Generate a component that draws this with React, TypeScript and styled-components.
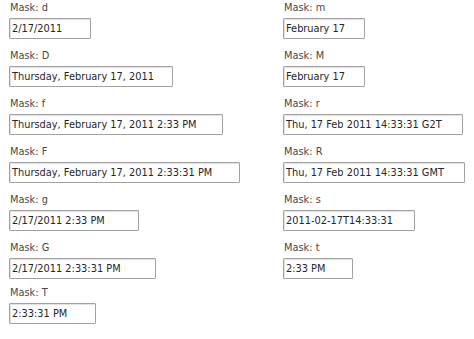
import React from 'react';
import styled, { createGlobalStyle } from 'styled-components';

const GlobalStyle = createGlobalStyle`
  html, body {
    margin: 0;
    padding: 0;
    background: #ffffff;
  }
`;

const Page = styled.div`
  font-family: "DejaVu Sans", Verdana, sans-serif;
  font-size: 9.8px;
  padding: 2px 0 0 9px;
  display: grid;
  grid-template-columns: 274px 1fr;
  align-items: start;
`;

const Column = styled.div`
  display: flex;
  flex-direction: column;
`;

const Field = styled.div<{ $tight?: boolean }>`
  display: flex;
  flex-direction: column;
  align-items: flex-start;
  margin-bottom: ${(p) => (p.$tight ? '8px' : '11px')};
`;

const Label = styled.label`
  color: #484848;
  line-height: 12px;
  height: 12px;
  margin-bottom: 4px;
  padding-left: 1px;
`;

const Box = styled.input<{ $w: number }>`
  box-sizing: border-box;
  width: ${(p) => p.$w}px;
  height: 21px;
  margin: 0;
  padding: 0 2px;
  border: 1px solid #a2a2a2;
  box-shadow: inset 1px 1px 0 #e2e2e2;
  border-radius: 1px;
  font-family: "DejaVu Sans", Verdana, sans-serif;
  font-size: 9.8px;
  color: #262626;
  background: #fff;
  outline: none;
`;

type Item = { mask: string; value: string; w: number; tight?: boolean };

const left: Item[] = [
  { mask: 'd', value: '2/17/2011', w: 82 },
  { mask: 'D', value: 'Thursday, February 17, 2011', w: 164 },
  { mask: 'f', value: 'Thursday, February 17, 2011 2:33 PM', w: 214 },
  { mask: 'F', value: 'Thursday, February 17, 2011 2:33:31 PM', w: 231 },
  { mask: 'g', value: '2/17/2011 2:33 PM', w: 130 },
  { mask: 'G', value: '2/17/2011 2:33:31 PM', w: 147, tight: true },
  { mask: 'T', value: '2:33:31 PM', w: 87 },
];

const right: Item[] = [
  { mask: 'm', value: 'February 17', w: 82 },
  { mask: 'M', value: 'February 17', w: 82 },
  { mask: 'r', value: 'Thu, 17 Feb 2011 14:33:31 G2T', w: 180 },
  { mask: 'R', value: 'Thu, 17 Feb 2011 14:33:31 GMT', w: 182 },
  { mask: 's', value: '2011-02-17T14:33:31', w: 132 },
  { mask: 't', value: '2:33 PM', w: 70 },
];

const renderItems = (items: Item[]) =>
  items.map((it) => (
    <Field key={it.mask} $tight={it.tight}>
      <Label>Mask: {it.mask}</Label>
      <Box $w={it.w} defaultValue={it.value} readOnly />
    </Field>
  ));

const App: React.FC = () => (
  <>
    <GlobalStyle />
    <Page>
      <Column>{renderItems(left)}</Column>
      <Column>{renderItems(right)}</Column>
    </Page>
  </>
);

export default App;
